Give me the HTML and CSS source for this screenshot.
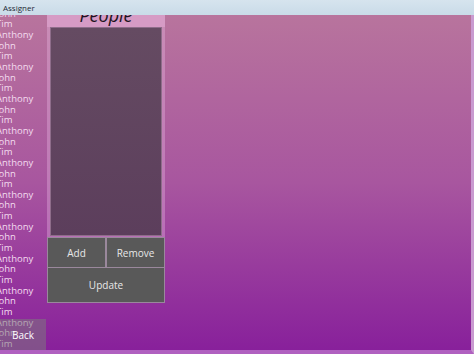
FILE: index.html
```html
<!DOCTYPE html>
<html>
<head>
<meta charset="utf-8">
<link rel="stylesheet" href="styles.css">
</head>
<body>
<div class="window">
  <div class="titlebar">Assigner</div>
  <div class="main">
    <div class="list">
      <div class="item">Anthony</div><div class="item">John</div><div class="item">Tim</div>
      <div class="item">Anthony</div><div class="item">John</div><div class="item">Tim</div>
      <div class="item">Anthony</div><div class="item">John</div><div class="item">Tim</div>
      <div class="item">Anthony</div><div class="item">John</div><div class="item">Tim</div>
      <div class="item">Anthony</div><div class="item">John</div><div class="item">Tim</div>
      <div class="item">Anthony</div><div class="item">John</div><div class="item">Tim</div>
      <div class="item">Anthony</div><div class="item">John</div><div class="item">Tim</div>
      <div class="item">Anthony</div><div class="item">John</div><div class="item">Tim</div>
      <div class="item">Anthony</div><div class="item">John</div><div class="item">Tim</div>
      <div class="item">Anthony</div><div class="item">John</div><div class="item">Tim</div>
      <div class="item">Anthony</div><div class="item">John</div><div class="item">Tim</div>
      <div class="item">Anthony</div><div class="item">John</div><div class="item">Tim</div>
    </div>
    <div class="panel">
      <div class="panel-head">People</div>
      <div class="panel-body">
        <div class="people-box"></div>
      </div>
      <div class="btn-row">
        <div class="btn">Add</div>
        <div class="btn">Remove</div>
      </div>
      <div class="btn btn-wide">Update</div>
    </div>
    <div class="back">Back</div>
  </div>
</div>
</body>
</html>
```

FILE: styles.css
```css
html, body {
  margin: 0;
  padding: 0;
}
body {
  width: 474px;
  height: 354px;
  overflow: hidden;
  font-family: "Open Sans", "Noto Sans", sans-serif;
}
.window {
  width: 474px;
  height: 354px;
  display: flex;
  flex-direction: column;
  background: #b56ac2;
}
.titlebar {
  height: 15px;
  flex: none;
  background: linear-gradient(#d6e4ee, #c9dbe8);
  color: #1e2a36;
  font-size: 8px;
  line-height: 15px;
  padding-left: 3px;
  position: relative;
  z-index: 2;
}
.main {
  flex: 1;
  position: relative;
  display: flex;
  align-items: flex-start;
  overflow: hidden;
  border-right: 3px solid #c99ad0;
  border-bottom: 4px solid #b060c0;
  background: linear-gradient(#b8749d 0%, #a8569f 50%, #88209b 100%);
}
.list {
  width: 47px;
  flex: none;
  margin-top: -17px;
  overflow: hidden;
}
.item {
  margin-left: -4px;
  font-size: 9.5px;
  line-height: 10.667px;
  height: 10.667px;
  color: #f3dcef;
  white-space: nowrap;
}
.panel {
  width: 118px;
  flex: none;
  margin-top: -12px;
  display: flex;
  flex-direction: column;
  background: rgba(235, 190, 230, 0.35);
}
.panel-head {
  height: 24px;
  line-height: 24px;
  text-align: center;
  font-style: italic;
  font-size: 18px;
  color: #1c1420;
  background: #d69bc5;
}
.panel-body {
  padding: 0 3px 1px 3px;
}
.people-box {
  height: 207px;
  border: 1px solid #8e6d8a;
  background: linear-gradient(#654b62, #5c3e5c);
}
.btn-row {
  display: flex;
}
.btn {
  flex: 1;
  height: 31px;
  box-sizing: border-box;
  border: 1px solid #9a889c;
  background: #595959;
  color: #e8e8e8;
  font-size: 10px;
  display: flex;
  align-items: center;
  justify-content: center;
}
.btn-wide {
  flex: none;
  height: 35px;
  border-top: none;
}
.back {
  position: absolute;
  left: 0;
  bottom: 0;
  width: 46px;
  height: 31px;
  background: rgba(125, 120, 125, 0.55);
  color: #ffffff;
  font-size: 10px;
  display: flex;
  align-items: center;
  justify-content: center;
}
```
